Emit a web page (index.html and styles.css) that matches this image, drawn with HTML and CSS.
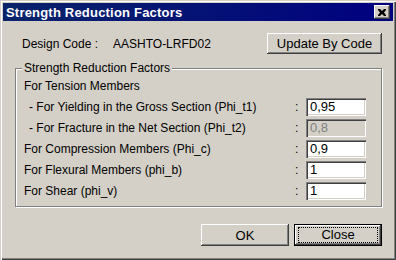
FILE: index.html
```html
<!DOCTYPE html>
<html lang="en">
<head>
    <meta charset="UTF-8">
    <title>Strength Reduction Factors</title>
    <link rel="stylesheet" href="styles.css">
</head>
<body>
    <div class="window">
        <!-- Заголовок окна -->
        <div class="titlebar">
            <span class="title">Strength Reduction Factors</span>
            <button class="close-btn" aria-label="Close">
                <svg width="8" height="7" viewBox="0 0 8 7">
                    <path d="M0 0h2l2 2 2-2h2v1L6 3.5 8 6v1H6L4 5 2 7H0V6l2-2.5L0 1z" fill="#000"/>
                </svg>
            </button>
        </div>

        <div class="content">
            <!-- Код проектирования -->
            <div class="code-row">
                <span class="code-label">Design Code :</span>
                <span class="code-value">AASHTO-LRFD02</span>
                <button class="btn update-btn">Update By Code</button>
            </div>

            <!-- Группа коэффициентов -->
            <fieldset class="group">
                <legend>Strength Reduction Factors</legend>
                <div class="factor-grid">
                    <div class="label">For Tension Members</div>
                    <div></div>
                    <div></div>

                    <div class="label sub">- For Yielding in the Gross Section (Phi_t1)</div>
                    <div class="colon">:</div>
                    <input class="field" type="text" value="0,95">

                    <div class="label sub">- For Fracture in the Net Section (Phi_t2)</div>
                    <div class="colon">:</div>
                    <input class="field" type="text" value="0,8" disabled>

                    <div class="label">For Compression Members (Phi_c)</div>
                    <div class="colon">:</div>
                    <input class="field" type="text" value="0,9">

                    <div class="label">For Flexural Members (phi_b)</div>
                    <div class="colon">:</div>
                    <input class="field" type="text" value="1">

                    <div class="label">For Shear (phi_v)</div>
                    <div class="colon">:</div>
                    <input class="field" type="text" value="1">
                </div>
            </fieldset>

            <!-- Кнопки -->
            <div class="footer">
                <button class="btn dialog-btn">OK</button>
                <button class="btn dialog-btn default"><span class="focus-rect">Close</span></button>
            </div>
        </div>
    </div>
</body>
</html>
```

FILE: styles.css
```css
/* Основа страницы */
body {
    margin: 0;
    font-family: 'Liberation Sans', Arial, sans-serif;
    font-size: 12px;
    color: #000;
}

/* Окно диалога */
.window {
    width: 396px;
    height: 260px;
    box-sizing: border-box;
    padding: 3px;
    background-color: #d4d0c8;
    box-shadow: inset 1px 1px #d4d0c8, inset 2px 2px #fff,
                inset -1px -1px #404040, inset -2px -2px #808080;
    display: flex;
    flex-direction: column;
}

/* Заголовок */
.titlebar {
    height: 18px;
    display: flex;
    align-items: center;
    justify-content: space-between;
    padding: 0 3px 0 3px;
    background: linear-gradient(to right, #0a246a, #000080);
    color: #fff;
}

.title {
    font-weight: bold;
    font-size: 13px;
    letter-spacing: 0.2px;
}

.close-btn {
    width: 16px;
    height: 14px;
    padding: 0;
    border: none;
    background-color: #d4d0c8;
    display: flex;
    align-items: center;
    justify-content: center;
    box-shadow: inset -1px -1px #404040, inset 1px 1px #fff,
                inset -2px -2px #808080;
}

/* Содержимое */
.content {
    flex: 1;
    padding: 12px 11px 0 12px;
    display: flex;
    flex-direction: column;
}

.code-row {
    height: 21px;
    display: flex;
    align-items: center;
}

.code-label {
    margin-left: 7px;
    width: 91px;
}

.code-value {
    flex: 1;
}

/* Кнопки */
.btn {
    font-family: 'Liberation Sans', Arial, sans-serif;
    font-size: 12px;
    color: #000;
    background-color: #d4d0c8;
    border: none;
    padding: 0;
    box-shadow: inset -1px -1px #404040, inset 1px 1px #fff,
                inset -2px -2px #808080, inset 2px 2px #d4d0c8;
    outline: none;
}

.update-btn {
    width: 115px;
    height: 21px;
    font-size: 13px;
}

/* Группа */
.group {
    margin: 7px 0 0 0;
    padding: 0 15px 0 6px;
    height: 146px;
    box-sizing: border-box;
    border: 1px solid #808080;
    box-shadow: inset 1px 1px #fff, 1px 1px #fff;
}

.group legend {
    padding: 0 2px;
    font-size: 12px;
    line-height: 14px;
    background-color: #d4d0c8;
}

.factor-grid {
    margin: 0 0 0 2px;
    display: grid;
    grid-template-columns: 1fr 11px 60px;
    grid-auto-rows: 21px;
    align-items: center;
}

.label {
    font-size: 12px;
    white-space: nowrap;
}

.label.sub {
    padding-left: 5px;
}

.colon {
    font-size: 12px;
}

/* Поля ввода */
.field {
    width: 60px;
    height: 18px;
    box-sizing: border-box;
    border: none;
    padding: 0 0 0 4px;
    font-family: 'Liberation Sans', Arial, sans-serif;
    font-size: 13px;
    color: #000;
    background-color: #fff;
    box-shadow: inset 1px 1px #808080, inset 2px 2px #404040,
                inset -1px -1px #fff, inset -2px -2px #d4d0c8;
    outline: none;
}

.field:disabled {
    background-color: #d4d0c8;
    color: #808080;
}

/* Нижние кнопки */
.footer {
    margin-top: auto;
    margin-bottom: 11px;
    display: flex;
    justify-content: flex-end;
    gap: 5px;
}

.dialog-btn {
    width: 88px;
    height: 22px;
    font-size: 13px;
}

.dialog-btn.default {
    box-shadow: inset 0 0 0 1px #000, inset -2px -2px #404040,
                inset 2px 2px #fff, inset -3px -3px #808080;
}

.focus-rect {
    display: block;
    margin: 0 4px;
    height: 14px;
    line-height: 14px;
    border: 1px dotted #000;
}
```
